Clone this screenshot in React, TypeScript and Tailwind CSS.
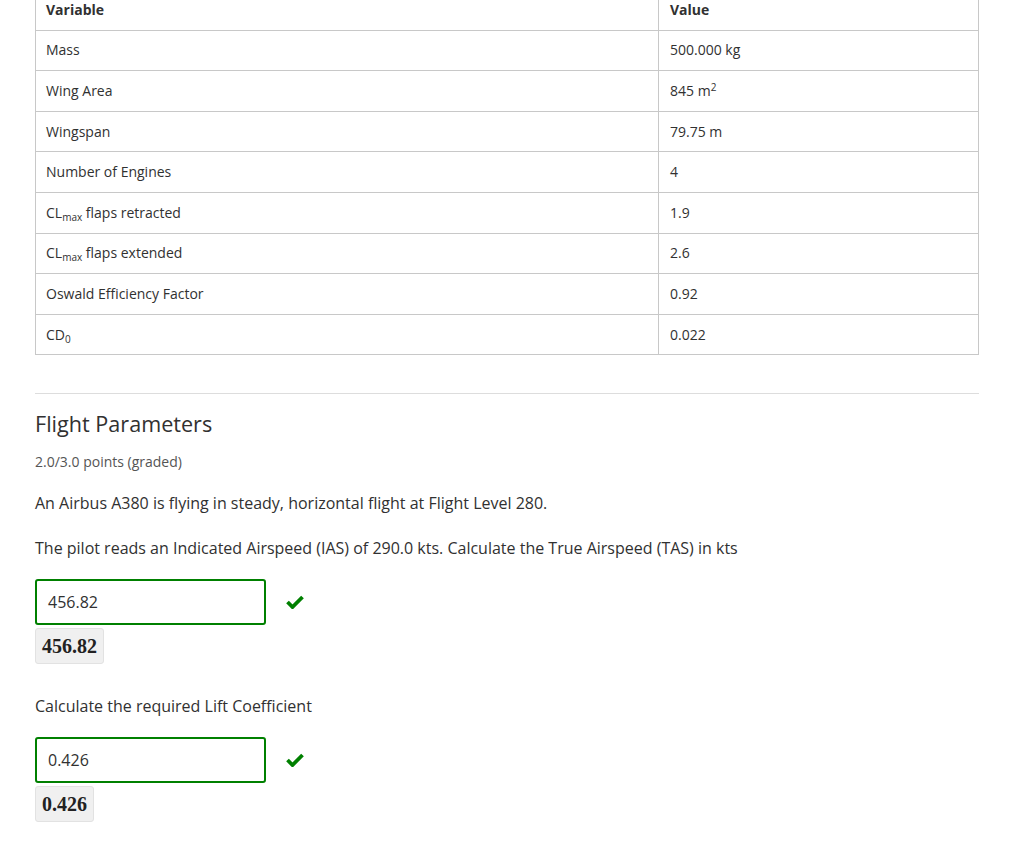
import React from "react";

const rows: { name: React.ReactNode; value: React.ReactNode }[] = [
  { name: "Mass", value: "500.000 kg" },
  { name: "Wing Area", value: <>845 m<sup className="text-[10px] relative -top-[5px] align-baseline">2</sup></> },
  { name: "Wingspan", value: "79.75 m" },
  { name: "Number of Engines", value: "4" },
  { name: <>CL<sub className="text-[10px] align-baseline relative top-[3px]">max</sub> flaps retracted</>, value: "1.9" },
  { name: <>CL<sub className="text-[10px] align-baseline relative top-[3px]">max</sub> flaps extended</>, value: "2.6" },
  { name: "Oswald Efficiency Factor", value: "0.92" },
  { name: <>CD<sub className="text-[10px] align-baseline relative top-[3px]">0</sub></>, value: "0.022" },
];

function Check() {
  return (
    <svg width="18" height="14" viewBox="0 0 18 14" className="ml-[20px]">
      <path d="M1.5 7 L6.5 12 L16.5 2" stroke="#008000" strokeWidth="3.8" fill="none" strokeLinecap="butt" strokeLinejoin="miter" />
    </svg>
  );
}

function Answer({ value }: { value: string }) {
  return (
    <div className="flex flex-col items-start">
      <div className="flex items-center">
        <div className="w-[231px] h-[46px] border-2 border-[#008000] rounded-[3px] flex items-center pl-[11px] text-[16px] text-[#313131]">
          {value}
        </div>
        <Check />
      </div>
      <div className="mt-[3px] bg-[#f0f0f0] border border-[#e2e2e2] rounded-[3px] px-[6px] h-[36px] flex items-center text-[20px] font-bold text-[#222]" style={{ fontFamily: '"Liberation Serif", "DejaVu Serif", serif' }}>
        {value}
      </div>
    </div>
  );
}

export default function App() {
  return (
    <div className="bg-white w-[1025px] min-h-[848px] overflow-hidden text-[#313131]" style={{ fontFamily: '"Open Sans", "Noto Sans", sans-serif' }}>
      <div className="ml-[35px] w-[944px]">
        <table className="-mt-[11px] w-full border-collapse text-[14px]">
          <thead>
            <tr className="h-[40.6px]">
              <th className="border border-[#c8c8c8] text-left font-bold px-[10px] w-[623px]">Variable</th>
              <th className="border border-[#c8c8c8] text-left font-bold px-[11px]">Value</th>
            </tr>
          </thead>
          <tbody>
            {rows.map((r, i) => (
              <tr key={i} className="h-[40.6px]">
                <td className="border border-[#c8c8c8] px-[10px] py-0 leading-[20px]">{r.name}</td>
                <td className="border border-[#c8c8c8] px-[11px] py-0 leading-[20px]">{r.value}</td>
              </tr>
            ))}
          </tbody>
        </table>
        <div className="mt-[38px] border-t border-[#dddddd]" />
        <h2 className="mt-[15px] text-[21.6px] leading-[30px] text-[#313131]">Flight Parameters</h2>
        <div className="mt-[13px] text-[14px] leading-[20px] text-[#555]">2.0/3.0 points (graded)</div>
        <p className="mt-[20px] text-[16px] leading-[22px]">An Airbus A380 is flying in steady, horizontal flight at Flight Level 280.</p>
        <p className="mt-[23px] text-[16px] leading-[22px]">The pilot reads an Indicated Airspeed (IAS) of 290.0 kts. Calculate the True Airspeed (TAS) in kts</p>
        <div className="mt-[20px]">
          <Answer value="456.82" />
        </div>
        <p className="mt-[31px] text-[16px] leading-[22px]">Calculate the required Lift Coefficient</p>
        <div className="mt-[20px]">
          <Answer value="0.426" />
        </div>
      </div>
    </div>
  );
}
